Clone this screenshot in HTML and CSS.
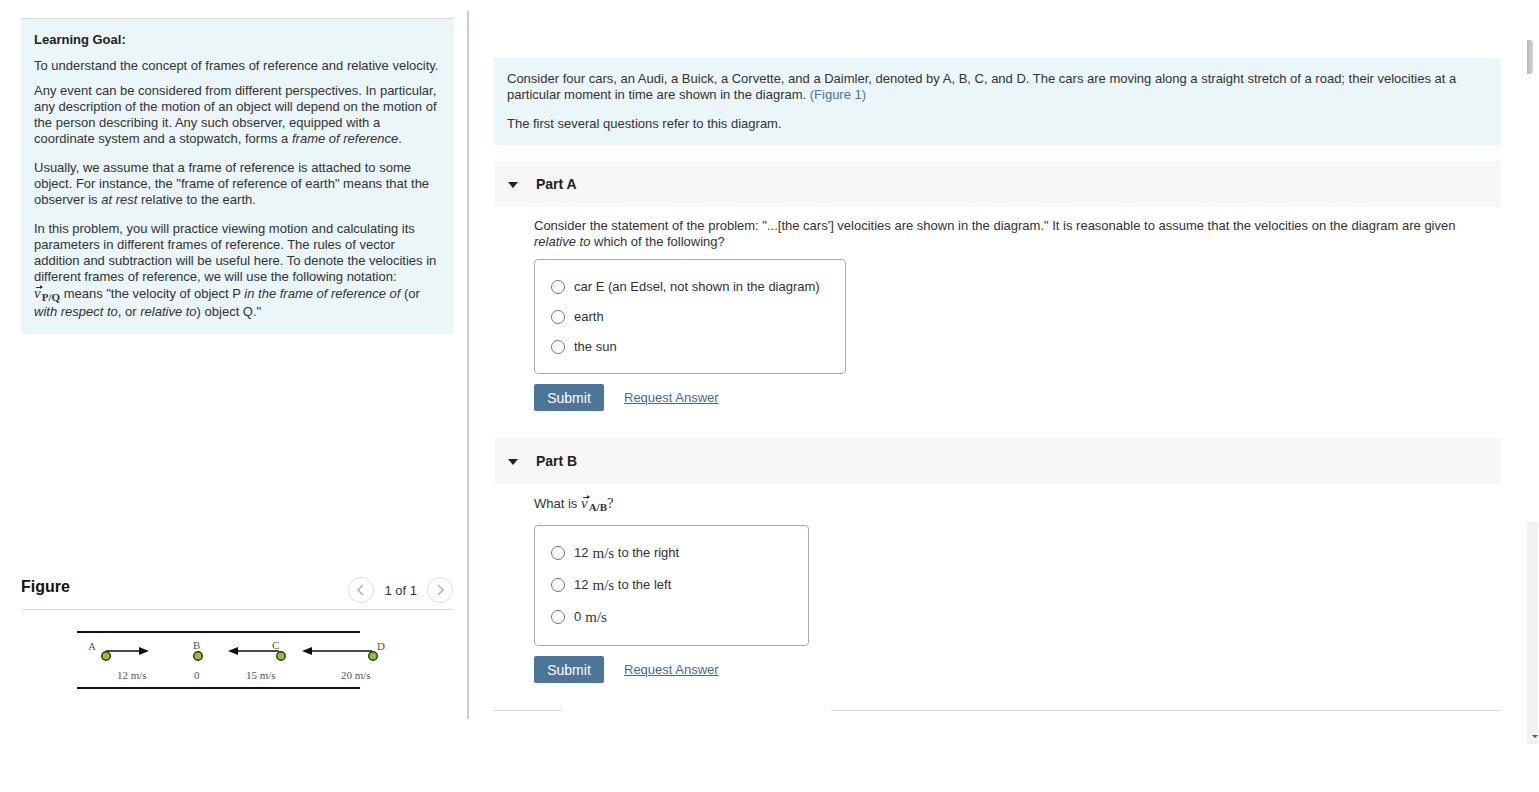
FILE: index.html
```html
<!DOCTYPE html>
<html>
<head>
<meta charset="utf-8">
<link rel="stylesheet" href="styles.css">
</head>
<body>
<div class="page">
  <aside class="left">
    <div class="goal">
      <p class="goal-title">Learning Goal:</p>
      <p class="p1">To understand the concept of frames of reference and relative velocity.</p>
      <p class="p2">Any event can be considered from different perspectives. In particular, any description of the motion of an object will depend on the motion of the person describing it. Any such observer, equipped with a coordinate system and a stopwatch, forms a <em>frame of reference</em>.</p>
      <p class="p3">Usually, we assume that a frame of reference is attached to some object. For instance, the "frame of reference of earth" means that the observer is <em>at rest</em> relative to the earth.</p>
      <p class="p3">In this problem, you will practice viewing motion and calculating its parameters in different frames of reference. The rules of vector addition and subtraction will be useful here. To denote the velocities in different frames of reference, we will use the following notation:<br><span class="notation"><span class="math"><span class="vec">v</span><sub class="msub">P/Q</sub></span> means "the velocity of object P <em>in the frame of reference of</em> (or</span><br><span class="last"><em>with respect to</em>, or <em>relative to</em>) object Q."</span></p>
    </div>

    <div class="figure-head">
      <span class="figure-title">Figure</span>
      <div class="pager">
        <span class="pbtn"><svg width="10" height="12" viewBox="0 0 10 12"><path d="M7 1 L2 6 L7 11" fill="none" stroke="#b5b5b5" stroke-width="1.6"/></svg></span>
        <span class="pcount">1 of 1</span>
        <span class="pbtn"><svg width="10" height="12" viewBox="0 0 10 12"><path d="M3 1 L8 6 L3 11" fill="none" stroke="#b5b5b5" stroke-width="1.6"/></svg></span>
      </div>
    </div>
    <svg class="diagram" width="320" height="70" viewBox="0 0 320 70">
      <line x1="7" y1="7" x2="290" y2="7" stroke="#111" stroke-width="2"/>
      <line x1="7" y1="63" x2="290" y2="63" stroke="#111" stroke-width="2"/>
      <g font-family="Liberation Serif, serif" font-size="11" fill="#555">
        <text x="18" y="25">A</text>
        <text x="123" y="24">B</text>
        <text x="202" y="24">C</text>
        <text x="307" y="25">D</text>
        <text x="47" y="54">12 m/s</text>
        <text x="124" y="54">0</text>
        <text x="176" y="54">15 m/s</text>
        <text x="271" y="54">20 m/s</text>
      </g>
      <g stroke="#111" stroke-width="1.6">
        <line x1="36" y1="26" x2="71" y2="26"/>
        <line x1="166" y1="26" x2="209" y2="26"/>
        <line x1="240" y1="26" x2="302" y2="26"/>
      </g>
      <g fill="#111">
        <path d="M79 26 L69 22 L69 30 Z"/>
        <path d="M158 26 L168 22 L168 30 Z"/>
        <path d="M232 26 L242 22 L242 30 Z"/>
      </g>
      <g fill="#8fbf35" stroke="#2a3a10" stroke-width="1.4">
        <circle cx="36" cy="31" r="4.3"/>
        <circle cx="128" cy="31" r="4.3"/>
        <circle cx="211" cy="31" r="4.3"/>
        <circle cx="303" cy="31" r="4.3"/>
      </g>
    </svg>
  </aside>

  <div class="divider"></div>

  <main class="right">
    <div class="intro">
      <p>Consider four cars, an Audi, a Buick, a Corvette, and a Daimler, denoted by A, B, C, and D. The cars are moving along a straight stretch of a road; their velocities at a particular moment in time are shown in the diagram. <a class="figlink">(Figure 1)</a></p>
      <p>The first several questions refer to this diagram.</p>
    </div>

    <section class="part">
      <div class="part-head"><span class="caret"></span><span class="part-title">Part A</span></div>
      <div class="part-body">
        <p class="question">Consider the statement of the problem: "...[the cars'] velocities are shown in the diagram." It is reasonable to assume that the velocities on the diagram are given <em>relative to</em> which of the following?</p>
        <div class="options">
          <label class="opt"><span class="radio"></span>car E (an Edsel, not shown in the diagram)</label>
          <label class="opt"><span class="radio"></span>earth</label>
          <label class="opt"><span class="radio"></span>the sun</label>
        </div>
        <div class="actions">
          <span class="submit">Submit</span>
          <a class="request">Request Answer</a>
        </div>
      </div>
    </section>

    <section class="part part-b">
      <div class="part-head"><span class="caret"></span><span class="part-title">Part B</span></div>
      <div class="part-body">
        <p class="question qb">What is <span class="math"><span class="vec">v</span><sub class="msub">A/B</sub></span><span class="serif">?</span></p>
        <div class="options options-b">
          <label class="opt"><span class="radio"></span>12 <span class="serif unit">m/s</span>&nbsp;to the right</label>
          <label class="opt"><span class="radio"></span>12 <span class="serif unit">m/s</span>&nbsp;to the left</label>
          <label class="opt"><span class="radio"></span>0 <span class="serif unit">m/s</span></label>
        </div>
        <div class="actions">
          <span class="submit">Submit</span>
          <a class="request">Request Answer</a>
        </div>
      </div>
    </section>

    <div class="bottom-rule"><span class="seg seg1"></span><span class="seg seg2"></span></div>
  </main>
</div>
<div class="sb-top"></div>
<div class="sb-bottom"><span class="sb-arrow"></span></div>
</body>
</html>
```

FILE: styles.css
```css
* { box-sizing: border-box; }
html, body { margin: 0; padding: 0; background: #fff; }
body {
  font-family: "Liberation Sans", Arial, sans-serif;
  font-size: 13px;
  line-height: 16px;
  color: #333;
}
p { margin: 0; }
em { font-style: italic; }

.page {
  display: flex;
  align-items: flex-start;
  padding: 11px 0 0 21px;
}

/* left column */
.left { width: 433px; margin-top: 7px; flex: none; }
.goal {
  border-top: 1px solid #dcdcdc;
  background: #eaf6f7;
  padding: 13px 14px 14px 13px;
}
.goal-title { font-weight: bold; color: #222; }
.p1 { margin-top: 10px; }
.p2 { margin-top: 9px; }
.p3 { margin-top: 13px; }
.notation { display: inline-block; margin-top: 0; line-height: 16px; }
.last { display: inline-block; margin-top: 2px; }

.math { font-family: "Liberation Serif", "Times New Roman", serif; font-size: 15px; white-space: nowrap; }
.vec { position: relative; font-style: italic; }
.vec::before {
  content: "";
  position: absolute;
  left: 2px; top: 2px;
  width: 6px; height: 1px;
  background: #333;
}
.vec::after {
  content: "";
  position: absolute;
  left: 6px; top: 0px;
  border-left: 3px solid #333;
  border-top: 2.5px solid transparent;
  border-bottom: 2.5px solid transparent;
}
.msub { font-size: 11px; font-weight: bold; line-height: 0; vertical-align: -3px; margin-left: 1px; }
.serif { font-family: "Liberation Serif", "Times New Roman", serif; font-size: 15px; }

.figure-head {
  margin-top: 241px;
  height: 35px;
  padding-bottom: 5px;
  border-bottom: 1px solid #dcdcdc;
  display: flex;
  align-items: center;
  justify-content: space-between;
}
.figure-title { font-size: 16px; font-weight: bold; color: #111; margin-bottom: 6px; }
.pager { display: flex; align-items: center; margin-right: 1px; }
.pbtn {
  width: 26px; height: 26px;
  border: 1px solid #dedede;
  border-radius: 50%;
  display: flex; align-items: center; justify-content: center;
}
.pcount { margin: 2px 10px 0 10px; color: #333; }
.diagram { display: block; margin: 15px 0 0 49px; }

/* divider */
.divider {
  width: 2px;
  height: 708px;
  background: #c6ccda;
  margin-left: 13px;
  flex: none;
}

/* right column */
.right { width: 1007px; margin-left: 25px; margin-top: 47px; flex: none; }
.intro {
  background: #eaf6f7;
  padding: 13px 13px 13px 13px;
}
.intro p + p { margin-top: 13px; }
.figlink { color: #4b7599; }

.part { margin-top: 16px; }
.part-b { margin-top: 27px; }
.part-head {
  height: 46px;
  background: #f7f7f7;
  display: flex;
  align-items: center;
}
.caret {
  width: 0; height: 0;
  border-left: 5px solid transparent;
  border-right: 5px solid transparent;
  border-top: 6px solid #222;
  margin-left: 14px;
  margin-right: 18px;
  margin-top: 1px;
}
.part-title { font-size: 14px; font-weight: bold; color: #222; }
.part-body { padding: 10px 41px 0 40px; }
.question { margin-top: 1px; }
.qb { margin-top: 1px; line-height: 16px; }

.options {
  display: inline-flex;
  flex-direction: column;
  margin-top: 9px;
  border: 1px solid #ababab;
  border-radius: 4px;
  padding: 12px 25px 11px 16px;
}
.options-b { width: 275px; padding-top: 11px; padding-bottom: 12px; margin-top: 13px; }
.opt { display: flex; align-items: center; height: 30px; color: #333; }
.options-b .opt { height: 32px; }
.radio {
  width: 14px; height: 14px;
  border: 1px solid #777;
  border-radius: 50%;
  background: #fff;
  margin-right: 9px;
  flex: none;
}
.unit { margin-left: 4px; }

.actions { display: flex; align-items: center; margin-top: 10px; }
.submit {
  width: 70px; height: 27px;
  background: #4b7599;
  color: #fff;
  font-size: 14px;
  border-radius: 2px;
  display: flex; align-items: center; justify-content: center;
}
.request {
  margin-left: 20px;
  color: #3f6c95;
  text-decoration: underline;
  font-size: 13px;
}

.bottom-rule { display: flex; justify-content: space-between; margin-top: 27px; }
.seg { height: 1px; background: #dcdcdc; }
.seg1 { width: 69px; }
.seg2 { width: 670px; }

/* scrollbar remnants */
.sb-top {
  position: absolute; left: 1527px; top: 40px;
  width: 6px; height: 34px;
  background: linear-gradient(90deg, #b8b8b8, #d6d6d6);
  border-radius: 0 3px 3px 0;
}
.sb-bottom {
  position: absolute; left: 1527px; top: 522px;
  width: 11px; height: 222px;
  background: #f1f1f1;
}
.sb-arrow {
  position: absolute; left: 5px; bottom: 6px;
  border-left: 3px solid transparent; border-right: 3px solid transparent;
  border-top: 3px solid #555;
}
```
